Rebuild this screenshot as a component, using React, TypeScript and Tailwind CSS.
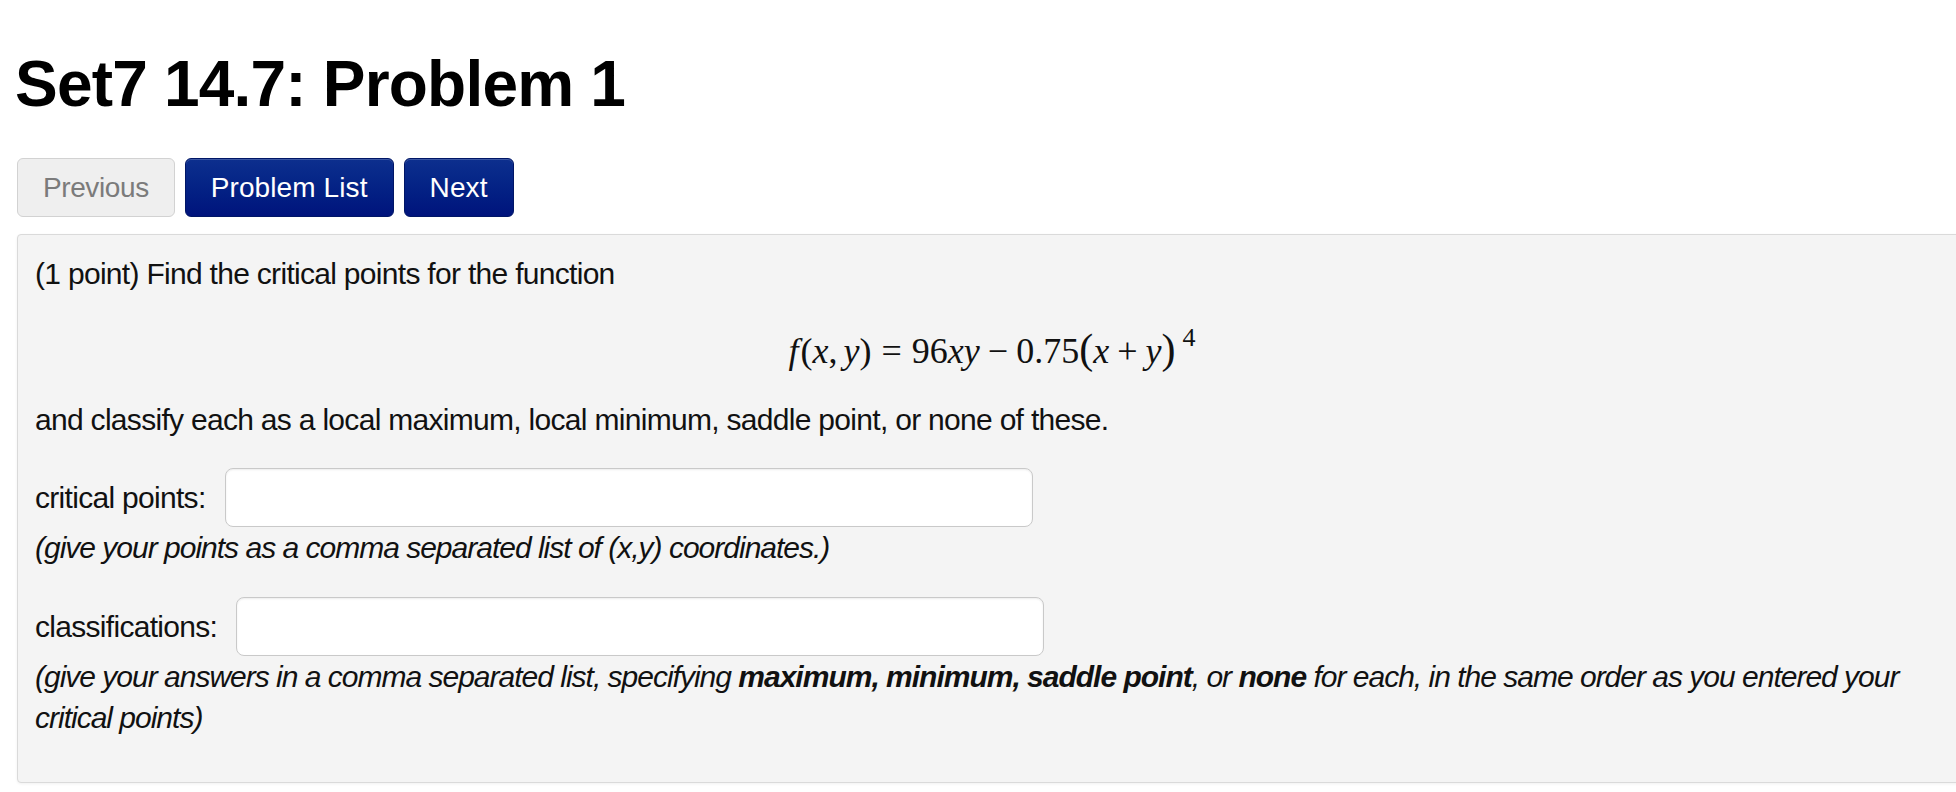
import React from 'react';

const NavButton: React.FC<{ label: string; disabled?: boolean }> = ({ label, disabled }) => {
  if (disabled) {
    return (
      <button
        disabled
        className="h-[59px] px-[25px] rounded-[6px] border border-[#d2d2d2] bg-[#efefef] text-[28px] tracking-[-0.4px] text-[#7b7b7b]"
      >
        {label}
      </button>
    );
  }
  return (
    <button className="h-[59px] px-[25px] rounded-[6px] border border-[#001666] bg-gradient-to-b from-[#0d2f8e] to-[#00137c] text-[28px] tracking-[0.1px] text-white shadow-[inset_0_1px_0_rgba(255,255,255,0.2)]">
      {label}
    </button>
  );
};

const AnswerRow: React.FC<{ label: string }> = ({ label }) => (
  <div className="flex items-center gap-[19px]">
    <span>{label}</span>
    <input
      type="text"
      className="w-[808px] h-[59px] rounded-[8px] border-[1.5px] border-[#c9c9c9] bg-white shadow-[inset_0_1px_2px_rgba(0,0,0,0.08)] outline-none px-3"
    />
  </div>
);

const Equation: React.FC = () => (
  <div className="h-[105px] pt-[24px] flex justify-center font-['Liberation_Serif','Times_New_Roman',serif] text-[36px] leading-[40px] tracking-normal text-[#111]">
    <span className="whitespace-nowrap pl-[12px]">
      <i>f</i>
      <span className="ml-[2px]">(</span>
      <i>x</i>,<span className="ml-[6px]" />
      <i>y</i>)
      <span className="mx-[10px]">=</span>
      96<i>xy</i>
      <span className="mx-[8px]">−</span>
      0.75<span className="text-[42px] leading-[40px]">(</span>
      <i>x</i>
      <span className="mx-[8px]">+</span>
      <i>y</i>
      <span className="text-[42px] leading-[40px]">)</span>
      <span className="ml-[7px] text-[26px] align-[17px]">4</span>
    </span>
  </div>
);

export default function App() {
  return (
    <div className="min-h-screen overflow-hidden bg-white pl-[17px] font-['Liberation_Sans',Arial,Helvetica,sans-serif] text-[#111]">
      <h1 className="mt-[48px] -ml-[2px] text-[64px] leading-[72px] font-bold tracking-[-0.8px] text-black">
        Set7 14.7: Problem 1
      </h1>

      <div className="mt-[38px] flex gap-[10px]">
        <NavButton label="Previous" disabled />
        <NavButton label="Problem List" />
        <NavButton label="Next" />
      </div>

      <div className="mt-[17px] -mr-[10px] rounded-[4px] border border-[#dadada] bg-[#f4f4f4] pt-[18px] pb-[44px] pl-[17px] pr-[28px] text-[30px] leading-[41px] tracking-[-0.7px] shadow-[0_1px_3px_rgba(0,0,0,0.06)]">
        <p>(1 point) Find the critical points for the function</p>

        <Equation />

        <p>and classify each as a local maximum, local minimum, saddle point, or none of these.</p>

        <div className="mt-[28px]">
          <AnswerRow label="critical points:" />
        </div>
        <p className="italic tracking-[-1px]">(give your points as a comma separated list of (x,y) coordinates.)</p>

        <div className="mt-[29px]">
          <AnswerRow label="classifications:" />
        </div>
        <p className="italic tracking-[-1px]">
          (give your answers in a comma separated list, specifying <b>maximum, minimum, saddle point</b>, or{' '}
          <b>none</b> for each, in the same order as you entered your critical points)
        </p>
      </div>
    </div>
  );
}
